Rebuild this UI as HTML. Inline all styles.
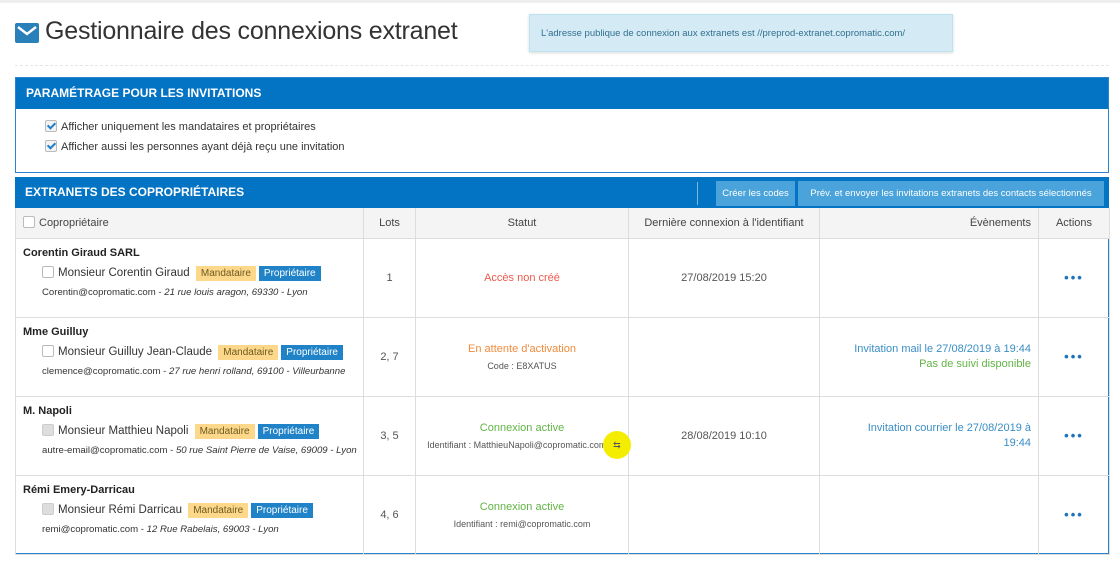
<!DOCTYPE html>
<html><head><meta charset="utf-8"><style>
*{box-sizing:border-box;margin:0;padding:0}
body{width:1120px;height:573px;background:#fff;font-family:"Liberation Sans",sans-serif;color:#333;position:relative;overflow:hidden}
.a{position:absolute}
.topline{left:0;top:0;width:1120px;height:3px;background:#eee}
h1{position:absolute;left:45px;top:17px;font-weight:normal;font-size:25px;color:#333;letter-spacing:-0.2px}
.info{left:529px;top:14px;width:424px;height:38px;background:#d4eaf5;border:1px solid #bde2f0;font-size:9.5px;color:#31708f;padding:13px 0 0 11px;box-shadow:0 1px 3px rgba(0,0,0,.15)}
.hr{left:15px;top:65px;width:1094px;border-top:1px dashed #e6e6e6}
.panel{border:1px solid #2a83cf}
.ph{background:#0373c4;color:#fff;font-weight:bold;font-size:12px;padding-left:10px;height:31px;line-height:31px}
.cb{display:inline-block;width:12px;height:12px;border:1px solid #bbb;border-radius:2px;background:#fff;vertical-align:-2px;margin-right:4px}
.cb.g{background:#ddd;border-color:#ccc}
.ck{position:relative;background:#f3f3f3}
.ck:after{content:"";position:absolute;left:3px;top:0px;width:3px;height:6px;border:solid #1f7fcb;border-width:0 2px 2px 0;transform:rotate(45deg)}
.opt{font-size:11px;color:#333;position:absolute;left:45px}
.btn{background:#4aa3da;color:#fff;font-size:9.5px;height:25px;line-height:25px;text-align:center;top:181px}
table{position:absolute;left:15px;top:208px;width:1094px;border-collapse:collapse;table-layout:fixed;font-size:11px}
th{height:30px;background:#f4f4f4;font-weight:normal;color:#444;border:1px solid #ddd;border-top:none;font-size:11px}
td{border:1px solid #ddd;height:79px;vertical-align:middle;text-align:center;color:#555}
td.n{text-align:left;vertical-align:top;padding:8px 0 0 7px}
.nm{font-weight:bold;color:#222;font-size:11px;margin-bottom:7px}
.pl{padding-left:19px;font-size:11.5px;color:#333;height:18px}
.em{padding-left:19px;font-size:9.6px;color:#333;margin-top:3px}
.em i{font-style:italic}
.bm{display:inline-block;background:#fdd88a;color:#6d5a20;font-size:10px;padding:2px 5px;margin-left:3px}
.bp{display:inline-block;background:#2183c7;color:#fff;font-size:10px;padding:2px 5px;margin-left:3px}
.red{color:#ec5a4c;font-size:11px}
.org{color:#f08b3c;font-size:11px}
.grn{color:#62b346;font-size:11px}
.sm{font-size:9px;color:#555;margin-top:6px}
.ev{text-align:right;padding-right:7px;color:#3a8ec5;font-size:11px;line-height:15px}
.dots{color:#1f74b8;font-size:13px;letter-spacing:2px;font-weight:bold}
.br{border-left:1px solid #2a83cf;border-right:1px solid #2a83cf}
</style></head><body>
<div class="a topline"></div>
<svg class="a" style="left:15px;top:23px" width="24" height="20" viewBox="0 0 24 20"><rect x="0" y="0" width="24" height="20" rx="2" fill="#2a80b9"/><path d="M3 4 L12 11 L21 4" stroke="#fff" stroke-width="2.4" fill="none"/></svg>
<h1>Gestionnaire des connexions extranet</h1>
<div class="a info">L'adresse publique de connexion aux extranets est //preprod-extranet.copromatic.com/</div>
<div class="a hr"></div>

<div class="a panel" style="left:15px;top:77px;width:1094px;height:96px">
<div class="ph">PARAMÉTRAGE POUR LES INVITATIONS</div>
</div>
<div class="a opt" style="top:120px"><span class="cb ck"></span>Afficher uniquement les mandataires et propriétaires</div>
<div class="a opt" style="top:140px"><span class="cb ck"></span>Afficher aussi les personnes ayant déjà reçu une invitation</div>

<div class="a" style="left:15px;top:177px;width:1094px;height:31px;background:#0373c4;color:#fff;font-weight:bold;font-size:12px;line-height:31px;padding-left:10px">EXTRANETS DES COPROPRIÉTAIRES</div>
<div class="a" style="left:697px;top:182px;width:1px;height:23px;background:#7fb6e0"></div>
<div class="a btn" style="left:716px;width:79px">Créer les codes</div>
<div class="a btn" style="left:798px;width:306px">Prév. et envoyer les invitations extranets des contacts sélectionnés</div>

<div class="a br" style="left:15px;top:208px;width:1094px;height:346px;border-bottom:1px solid #2a83cf"></div>
<table>
<colgroup><col style="width:348px"><col style="width:52px"><col style="width:213px"><col style="width:191px"><col style="width:219px"><col style="width:71px"></colgroup>
<tr><th style="text-align:left;padding-left:7px"><span class="cb"></span>Copropriétaire</th><th>Lots</th><th>Statut</th><th>Dernière connexion à l'identifiant</th><th style="text-align:right;padding-right:7px">Évènements</th><th>Actions</th></tr>
<tr>
<td class="n"><div class="nm">Corentin Giraud SARL</div><div class="pl"><span class="cb"></span>Monsieur Corentin Giraud <span class="bm">Mandataire</span><span class="bp">Propriétaire</span></div><div class="em">Corentin@copromatic.com - <i>21 rue louis aragon, 69330 - Lyon</i></div></td>
<td>1</td><td><span class="red">Accès non créé</span></td><td>27/08/2019 15:20</td><td></td><td class="dots">•••</td></tr>
<tr>
<td class="n"><div class="nm">Mme Guilluy</div><div class="pl"><span class="cb"></span>Monsieur Guilluy Jean-Claude <span class="bm">Mandataire</span><span class="bp">Propriétaire</span></div><div class="em">clemence@copromatic.com - <i>27 rue henri rolland, 69100 - Villeurbanne</i></div></td>
<td>2, 7</td><td><div class="org">En attente d'activation</div><div class="sm">Code : E8XATUS</div></td><td></td><td class="ev">Invitation mail le 27/08/2019 à 19:44<br><span style="color:#62b346">Pas de suivi disponible</span></td><td class="dots">•••</td></tr>
<tr>
<td class="n"><div class="nm">M. Napoli</div><div class="pl"><span class="cb g"></span>Monsieur Matthieu Napoli <span class="bm">Mandataire</span><span class="bp">Propriétaire</span></div><div class="em">autre-email@copromatic.com - <i>50 rue Saint Pierre de Vaise, 69009 - Lyon</i></div></td>
<td>3, 5</td><td><div class="grn">Connexion active</div><div class="sm">Identifiant : MatthieuNapoli@copromatic.com <span style="display:inline-block;width:28px;height:28px;border-radius:50%;background:#f5ed00;vertical-align:middle;margin:-12px -14px -12px -6px;text-align:center;line-height:28px;font-size:9px">⇆</span></div></td><td>28/08/2019 10:10</td><td class="ev">Invitation courrier le 27/08/2019 à<br>19:44</td><td class="dots">•••</td></tr>
<tr>
<td class="n" style="height:78px"><div class="nm">Rémi Emery-Darricau</div><div class="pl"><span class="cb g"></span>Monsieur Rémi Darricau <span class="bm">Mandataire</span><span class="bp">Propriétaire</span></div><div class="em">remi@copromatic.com - <i>12 Rue Rabelais, 69003 - Lyon</i></div></td>
<td>4, 6</td><td><div class="grn">Connexion active</div><div class="sm">Identifiant : remi@copromatic.com</div></td><td></td><td></td><td class="dots">•••</td></tr>
</table>
</body></html>
